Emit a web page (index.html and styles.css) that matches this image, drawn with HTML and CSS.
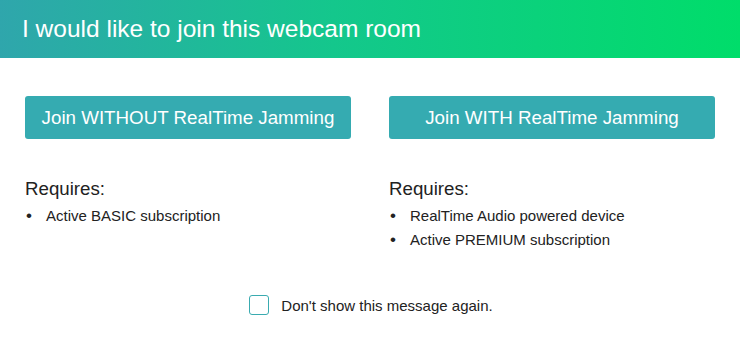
FILE: index.html
```html
<!DOCTYPE html>
<html>
<head>
<meta charset="utf-8">
<link rel="stylesheet" href="styles.css">
</head>
<body>
<div class="dialog">
  <header class="header">I would like to join this webcam room</header>
  <div class="options">
    <div class="option">
      <button class="btn">Join WITHOUT RealTime Jamming</button>
      <h3 class="req-title">Requires:</h3>
      <ul class="req-list">
        <li>Active BASIC subscription</li>
      </ul>
    </div>
    <div class="option">
      <button class="btn">Join WITH RealTime Jamming</button>
      <h3 class="req-title">Requires:</h3>
      <ul class="req-list">
        <li>RealTime Audio powered device</li>
        <li>Active PREMIUM subscription</li>
      </ul>
    </div>
  </div>
  <label class="dont-show">
    <span class="checkbox"></span>
    <span class="dont-text">Don't show this message again.</span>
  </label>
</div>
</body>
</html>
```
FILE: styles.css
```css
html, body {
  margin: 0;
  padding: 0;
  background: #ffffff;
}
body {
  font-family: "Liberation Sans", Arial, sans-serif;
  color: #222;
}
.dialog {
  width: 740px;
  height: 349px;
  overflow: hidden;
}
.header {
  height: 58px;
  box-sizing: border-box;
  padding: 0 0 0 22px;
  display: flex;
  align-items: center;
  background: linear-gradient(to right, #2fa6ac 0%, #14c78c 45%, #00dd6a 100%);
  color: #ffffff;
  font-size: 24.5px;
}
.options {
  display: grid;
  grid-template-columns: 326px 326px;
  column-gap: 38px;
  padding: 38px 0 0 25px;
}
.option {
  display: flex;
  flex-direction: column;
}
.btn {
  height: 43px;
  border: none;
  border-radius: 3px;
  background: #35abb1;
  color: #ffffff;
  font-family: "Liberation Sans", Arial, sans-serif;
  font-size: 18.75px;
  padding: 0;
  cursor: pointer;
}
.req-title {
  margin: 38px 0 0 0;
  font-size: 18.7px;
  font-weight: normal;
  color: #222;
  line-height: 24px;
}
.req-list {
  list-style: none;
  margin: 3px 0 0 0;
  padding: 0;
  font-size: 15px;
  line-height: 24px;
  color: #222;
}
.req-list li {
  display: flex;
}
.req-list li::before {
  content: "\2022";
  display: inline-block;
  width: 21px;
  padding-left: 1px;
  box-sizing: border-box;
  font-size: 17px;
}
.dont-show {
  display: flex;
  align-items: center;
  justify-content: center;
  gap: 12px;
  margin-top: 43px;
  padding-left: 2px;
}
.checkbox {
  width: 20px;
  height: 20px;
  box-sizing: border-box;
  border: 1.5px solid #3aabb0;
  border-radius: 3px;
  background: #fff;
}
.dont-text {
  font-size: 15px;
  color: #222;
}
```
